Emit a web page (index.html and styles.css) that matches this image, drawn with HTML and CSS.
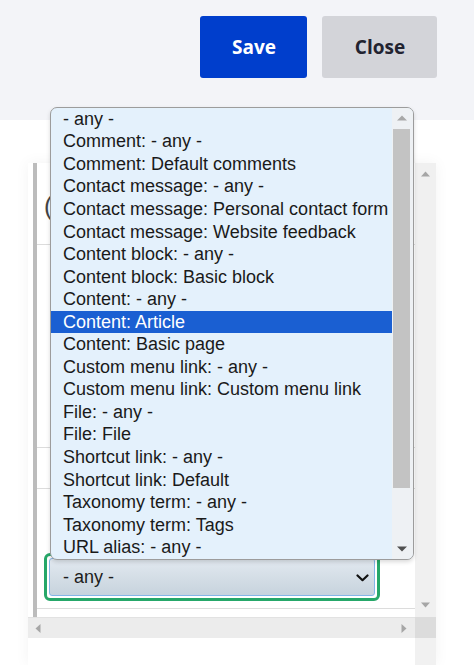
FILE: index.html
```html
<!DOCTYPE html>
<html lang="en">
<head>
  <meta charset="UTF-8" />
  <meta name="viewport" content="width=device-width, initial-scale=1.0">
  <title>Configure filter</title>
  <link rel="stylesheet" href="styles.css">
</head>
<body>
  <div class="button-bar">
    <button class="btn btn-primary">Save</button>
    <button class="btn">Close</button>
  </div>

  <div class="dialog-content">
    <div class="scroll-frame">
      <div class="scroll-view">
        <div class="panel">
          <div class="row row-title"><span class="paren">(</span></div>
          <div class="row row-mid"></div>
          <div class="row row-small"></div>
          <div class="row row-field">
            <div class="focus-ring">
              <div class="select">
                <span>- any -</span>
                <svg class="chevron" width="13" height="8" viewBox="0 0 13 8">
                  <path d="M1.5 1.5 L6.5 6.2 L11.5 1.5" fill="none" stroke="#111" stroke-width="2.2" stroke-linecap="round" stroke-linejoin="round"/>
                </svg>
              </div>
            </div>
          </div>
        </div>
      </div>

      <div class="vscroll">
        <svg width="9" height="6" viewBox="0 0 9 6"><polygon points="0,5.5 4.5,0.5 9,5.5" fill="#a6a6a6"/></svg>
        <svg width="9" height="6" viewBox="0 0 9 6"><polygon points="0,0.5 4.5,5.5 9,0.5" fill="#a6a6a6"/></svg>
      </div>

      <div class="hscroll">
        <svg width="6" height="9" viewBox="0 0 6 9"><polygon points="5.5,0 0.5,4.5 5.5,9" fill="#a6a6a6"/></svg>
        <svg width="6" height="9" viewBox="0 0 6 9"><polygon points="0.5,0 5.5,4.5 0.5,9" fill="#a6a6a6"/></svg>
      </div>
      <div class="corner"></div>

      <div class="below"></div>
      <div class="below-bar"></div>
    </div>
  </div>

  <!-- open dropdown of the select above -->
  <div class="listbox">
    <div class="options">
      <div class="option">- any -</div>
      <div class="option">Comment: - any -</div>
      <div class="option">Comment: Default comments</div>
      <div class="option">Contact message: - any -</div>
      <div class="option">Contact message: Personal contact form</div>
      <div class="option">Contact message: Website feedback</div>
      <div class="option">Content block: - any -</div>
      <div class="option">Content block: Basic block</div>
      <div class="option">Content: - any -</div>
      <div class="option selected">Content: Article</div>
      <div class="option">Content: Basic page</div>
      <div class="option">Custom menu link: - any -</div>
      <div class="option">Custom menu link: Custom menu link</div>
      <div class="option">File: - any -</div>
      <div class="option">File: File</div>
      <div class="option">Shortcut link: - any -</div>
      <div class="option">Shortcut link: Default</div>
      <div class="option">Taxonomy term: - any -</div>
      <div class="option">Taxonomy term: Tags</div>
      <div class="option">URL alias: - any -</div>
    </div>
    <div class="list-scroll">
      <svg class="arrow-up" width="10" height="6" viewBox="0 0 10 6"><polygon points="0,5.5 5,0.5 10,5.5" fill="#a8a8a8"/></svg>
      <div class="thumb"></div>
      <svg class="arrow-down" width="10" height="6" viewBox="0 0 10 6"><polygon points="0,0.5 5,5.5 10,0.5" fill="#505050"/></svg>
    </div>
  </div>
</body>
</html>
```

FILE: styles.css
```css
html, body {
  margin: 0;
  height: 665px;
  overflow: hidden;
  background: #ffffff;
  font-family: "Liberation Sans", Arial, sans-serif;
  color: #1c1c1c;
}

/* top action bar */
.button-bar {
  height: 120px;
  box-sizing: border-box;
  background: #f3f4f8;
  display: flex;
  justify-content: flex-end;
  align-items: flex-start;
  gap: 15px;
  padding: 16px 37px 0 0;
}
.btn {
  font-family: "Open Sans", "Noto Sans", sans-serif;
  font-weight: 700;
  font-size: 19px;
  height: 62px;
  width: 115px;
  border: none;
  border-radius: 3px;
  background: #d3d4d9;
  color: #222330;
  padding: 0 0 0 1px;
}
.btn-primary {
  width: 107px;
  background: #003ecc;
  color: #ffffff;
}

/* scrolling dialog body */
.dialog-content {
  padding: 43px 0 0 28px;
}
.scroll-frame {
  width: 408px;
  height: 502px;
  display: grid;
  grid-template-columns: 387px 21px;
  grid-template-rows: 454px 21px 1fr;
  box-shadow: 0 0 14px rgba(0, 0, 0, 0.05);
}
.scroll-view {
  background: #ffffff;
  padding-left: 5px;
  overflow: hidden;
}
.panel {
  height: 100%;
  border-left: 4px solid #bcbcbc;
  display: flex;
  flex-direction: column;
}
.row {
  border-bottom: 1px solid #dcdcdc;
}
.row-title {
  height: 82px;
  padding: 29px 0 0 7px;
  box-sizing: border-box;
}
.paren {
  font-size: 25px;
  color: #444;
}
.row-mid {
  height: 202px;
}
.row-small {
  height: 40px;
}
.row-field {
  flex: 1;
  padding: 64px 0 0 7px;
  box-sizing: border-box;
  margin-bottom: 8px;
}
.focus-ring {
  width: 336px;
  height: 48px;
  box-sizing: border-box;
  border: 3px solid #26a769;
  border-radius: 6px;
  padding: 2px;
  background: #ffffff;
}
.select {
  height: 100%;
  box-sizing: border-box;
  border: 1px solid #84b6e8;
  border-radius: 3px;
  background: linear-gradient(#e2e9f0, #c7d3dd);
  display: flex;
  align-items: center;
  justify-content: space-between;
  padding: 0 5px 0 13px;
  font-size: 18px;
  color: #1c1c1c;
}
.chevron {
  margin-top: 1px;
}

.vscroll {
  background: #f0f0f0;
  display: flex;
  flex-direction: column;
  justify-content: space-between;
  align-items: center;
  padding: 8px 0 9px;
}
.hscroll {
  background: #ececec;
  border-top: 1px solid #e2e2e2;
  display: flex;
  justify-content: space-between;
  align-items: center;
  padding: 0 8px 0 7px;
}
.corner {
  background: #dcdcdc;
}
.below {
  background: #ffffff;
}
.below-bar {
  background: #f1f1f1;
}

/* dropdown popup */
.listbox {
  position: absolute;
  left: 50px;
  top: 107px;
  width: 364px;
  height: 453px;
  box-sizing: border-box;
  border: 1px solid #9c9c9c;
  border-radius: 7px;
  background: #e4f1fc;
  display: flex;
  overflow: hidden;
  box-shadow: 0 2px 4px rgba(0, 0, 0, 0.15);
}
.options {
  flex: 1;
  display: flex;
  flex-direction: column;
  font-size: 18px;
}
.option {
  flex: 1;
  display: flex;
  align-items: center;
  padding-left: 12px;
  white-space: nowrap;
  color: #1a1a1a;
}
.option.selected {
  background: #1a5fd2;
  color: #ffffff;
}
.list-scroll {
  width: 19px;
  background: #eef1f4;
  display: flex;
  flex-direction: column;
  align-items: center;
  padding-right: 2px;
}
.arrow-up {
  margin: 7px 0 8px;
}
.thumb {
  width: 17px;
  height: 359px;
  background: #c3c3c3;
}
.arrow-down {
  margin-top: auto;
  margin-bottom: 7px;
}
```
